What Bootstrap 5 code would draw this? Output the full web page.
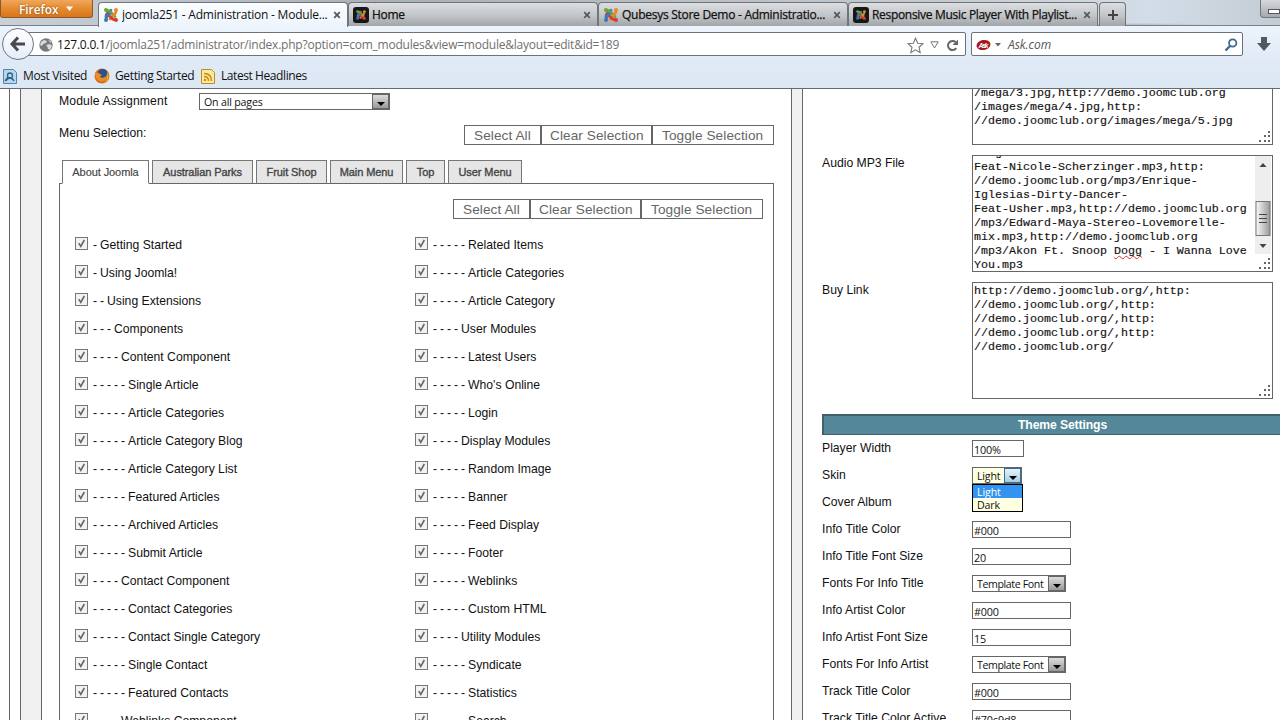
<!DOCTYPE html>
<html lang="en">
<head>
<meta charset="utf-8">
<title>joomla251 - Administration - Module Manager</title>
<link rel="stylesheet" href="https://cdn.jsdelivr.net/npm/bootstrap@5.3.0/dist/css/bootstrap.min.css">
<style>
body{width:1280px;height:720px;overflow:hidden;font:12.2px/16px "Liberation Sans",Arial,sans-serif;color:#111;background:#fff}
svg{display:block;flex:none}
.chrome{height:89px;font-family:"Open Sans","Noto Sans",sans-serif;font-size:12px;background:linear-gradient(#edf4fc 25px,#e0eaf6 60px,#dde8f5);border-bottom:1px solid #666b72;color:#111}
.strip{height:26px;background:radial-gradient(ellipse at 88% 100%,#aeb6be 0,#c3ccd500 6%),linear-gradient(90deg,#c9d0d8,#a9b0b6 30%,#c4cbd2 75%,#d3dde7 90%,#c3ccd5);border-bottom:1px solid #7a8087}
.ffx{width:93px;height:18px;background:linear-gradient(#f0a85b,#e58a31 50%,#d9751b);border:1px solid #8a5a2a;border-top:0;border-radius:0 0 3px 3px;color:#fff;font-weight:600;font-size:11.8px;line-height:18px;padding-left:18px;text-shadow:0 0 2px #7a4310}
.btab{width:250px;height:24px;margin-top:2px;border:1px solid #6f757b;border-bottom:0;border-radius:4px 4px 0 0;background:linear-gradient(#dcdee0,#c2c5c8 55%,#a2a5a8);padding:0 6px 0 4px;line-height:24px;white-space:nowrap}
.btab.on{height:25px;background:linear-gradient(#fbfdff,#edf4fc);position:relative;z-index:1}
.btab.plus{width:27px;padding:0;margin-left:1px}
.cap{flex:1;overflow:hidden;margin-left:3px}
.c1{letter-spacing:-.22px}.c2{letter-spacing:-.3px;-webkit-text-stroke:.25px}
.c3{letter-spacing:-.27px;-webkit-text-stroke:.25px}.c4{letter-spacing:-.31px;-webkit-text-stroke:.25px}
.minb{width:20px;height:18px;border:1px solid #70777e;border-top:0;border-right:0;border-radius:0 0 0 4px;background:linear-gradient(#d5d9dd,#a5aab0)}
.minb i{display:block;width:12px;height:5px;margin:9px 0 0 7px;background:#fff;border:1px solid #555}
.tools{height:37px;padding:6px 8px 0 2px}
.back{width:32px;height:32px;border:1px solid #6d7580;border-radius:50%;background:linear-gradient(#fff,#e4edf8);margin-top:-4px;z-index:2}
.url{width:942px;height:24px;margin-left:-10px;border:1px solid #6c727a;background:#fff;padding:2px 6px 0 10px;color:#6c6c6c;border-radius:0 2px 2px 0}
.url span{letter-spacing:-.225px;margin-left:4px;color:#707070;white-space:nowrap}
.url b{font-weight:400;color:#111}
.find{width:272px;height:24px;margin-left:5px;border:1px solid #6c727a;border-radius:2px;background:#fff;padding:1px 4px 0}
.marks{height:26px;padding-left:3px;letter-spacing:-.37px}
.page-area{height:631px;overflow:hidden}
.g{background:#f0f0f0;border:solid #666;border-width:0 1px}
.mainc{width:749px;padding:0 17px}
.sel{border:1px solid #666;background:#fff;height:17px;font:10.6px/17px "Open Sans","Noto Sans",sans-serif;padding-left:4px;letter-spacing:-.17px;white-space:nowrap;color:#111}
.sel.tf{letter-spacing:-.38px}
.sel i{width:17px;height:15px;border:1px solid #666;background:linear-gradient(#ddd,#999);display:flex;align-items:center;justify-content:center;margin-left:auto}
.sel i:after{content:"";border:4px solid transparent;border-top-color:#000;border-bottom:0;margin-top:4px}
.bset{height:20px}
.bset span{border:1px solid #666;margin-left:-1px;height:20px;font-size:13.6px;line-height:19px;color:#666;padding-left:9px;white-space:nowrap;letter-spacing:.09px}
.bset span + span{border-left-width:2px;padding-left:8px}
.bset span:last-child{padding-left:9px}
.tabset{height:24px;padding-left:3px;gap:3px;margin-bottom:-1px;position:relative}
.tabset span{border:1px solid #777;border-bottom-color:#666;background:#e6e6e6;color:#444;-webkit-text-stroke:.35px;font-size:11px;letter-spacing:-.08px;line-height:23px;text-align:center;height:24px;white-space:nowrap}
.tabset .on{background:#fff;border-bottom-color:#fff;-webkit-text-stroke:.15px}
.pane{width:715px;height:560px;border:1px solid #666;padding:15px 10px 0 15px}
.it{height:28px;white-space:nowrap;line-height:31px}
.it svg{margin:7px 5px 0 0}
.it em{font-style:normal;letter-spacing:-.18px;word-spacing:-.08px;white-space:pre}
.side{flex:1;padding-left:19px;overflow:hidden}
.side .lb{width:150px;flex:none;white-space:nowrap}
.ta{width:301px;border:1px solid #666;font:11.67px/14px "Liberation Mono","Courier New",monospace;white-space:pre;padding-left:1px;overflow:hidden;position:relative;color:#111;-webkit-text-stroke:.15px}
.grip{position:absolute;right:1px;bottom:1px}
.sb{position:absolute;right:1px;top:0;width:16px;height:98px;background:#eee}
.th{height:21px;background:#54879a;border:1px solid #41606c;border-top-width:2px;border-left-width:2px;border-right:0;color:#fff;font-weight:700;line-height:18px;padding-left:194px;letter-spacing:-.12px}
.fr{height:27px}
.inp{border:1px solid #666;height:17px;width:99px;font:10.8px/17px "Open Sans","Noto Sans",sans-serif;padding-left:1px;letter-spacing:-.15px}
.drop{position:absolute;left:0;top:17px;width:51px;height:28px;border:1px solid #000;background:#ffffe1;font:10.6px/14px "Open Sans","Noto Sans",sans-serif;z-index:3;letter-spacing:-.1px}
.drop div{padding-left:4px;height:13px}
.drop .hi{background:#3393f3;color:#fff}
.sg{text-decoration:underline wavy #d33 1px;text-underline-offset:1px;text-decoration-skip-ink:none}
</style>
</head>
<body>
<svg width="0" height="0" class="position-absolute">
<defs>
<g id="joom" fill="none" stroke-width="2.7" stroke-linecap="round">
<path stroke="#3d78b8" d="M3 10.5V9c0-1 .4-1.600 1-2.200l4-3.600"/><path stroke="#69a437" d="M3.500 3.500c1.500-.5 2.500 0 3.500 1l5 5"/><path stroke="#e8892b" d="M12.700 3.500c.5 1.500 0 2.500-1 3.500L7 12"/><path stroke="#db3c32" d="M12.500 12.500c-1.500.5-2.500 0-3.500-1L4 6.500"/>
<path stroke="#3d78b8" d="M3.500 12.500c-.5-1.500 0-2.500 1-3.500l2-2"/>
</g>
<symbol id="fav" viewBox="0 0 16 16"><use href="#joom"/><circle cx="3" cy="3" r="2" fill="#69a437"/><circle cx="13" cy="3" r="2" fill="#e8892b"/><circle cx="3" cy="13" r="2" fill="#3d78b8"/><circle cx="13" cy="13" r="2" fill="#db3c32"/></symbol>
<symbol id="favd" viewBox="0 0 16 16"><rect width="16" height="16" rx="3" fill="#15181a"/><use href="#fav" x="2.500" y="2.500" width="11" height="11"/></symbol>
<symbol id="cls" viewBox="0 0 8 8"><path d="M1.200 1.200l5.600 5.600M6.800 1.200L1.200 6.800" stroke="#54585c" stroke-width="1.700"/></symbol>
<symbol id="chk" viewBox="0 0 13 13"><rect x=".5" y=".5" width="12" height="12" fill="#f2f2f2" stroke="#777"/><path d="M3.800 6.200l2 3.300L9.300 3" fill="none" stroke="#666" stroke-width="1.600"/></symbol>
<symbol id="grp" viewBox="0 0 12 12"><path fill="#666" d="M9 0h2v2H9zM5 4h2v2H5zM9 4h2v2H9zM0 9h2v2H0zM5 9h2v2H5zM9 9h2v2H9z"/></symbol>
</defs></svg>

<header class="chrome">
  <div class="strip d-flex">
    <div class="ffx d-flex">Firefox<svg class="ms-2" style="margin-top:5px" width="8" height="8"><path d="M0 1.500h7L3.500 6z" fill="#fff"/></svg></div>
    <div class="btab on d-flex align-items-center" style="margin-left:5px"><svg width="16" height="16"><use href="#fav"/></svg><span class="cap c1">joomla251 - Administration - Module...</span><svg width="8" height="8"><use href="#cls"/></svg></div>
    <div class="btab d-flex align-items-center"><svg width="16" height="16"><use href="#favd"/></svg><span class="cap c2">Home</span><svg width="8" height="8"><use href="#cls"/></svg></div>
    <div class="btab d-flex align-items-center"><svg width="16" height="16"><use href="#fav"/></svg><span class="cap c3">Qubesys Store Demo - Administratio...</span><svg width="8" height="8"><use href="#cls"/></svg></div>
    <div class="btab d-flex align-items-center"><svg width="16" height="16"><use href="#favd"/></svg><span class="cap c4">Responsive Music Player With Playlist...</span><svg width="8" height="8"><use href="#cls"/></svg></div>
    <div class="btab plus d-flex align-items-center justify-content-center"><svg width="10" height="10"><path d="M5 0v10M0 5h10" stroke="#444" stroke-width="2"/></svg></div>
    <div class="minb ms-auto"><i></i></div>
  </div>
  <div class="tools d-flex">
    <div class="back d-flex align-items-center justify-content-center position-relative"><svg width="16" height="16"><path d="M8 1.500L2 8l6 6.500M2.500 8H15" fill="none" stroke="#47494d" stroke-width="3"/></svg></div>
    <div class="url d-flex align-items-center">
      <svg class="ms-1" width="14" height="14"><circle cx="7" cy="7" r="6.700" fill="#77797c"/><path d="M2 4l3-2 3 1-1 2-3 1-1 2-2-1zM7 7l4-1 2 2-2 4-2-1-1-3zM9 2l3 1v2z" fill="#d8dadc"/></svg>
      <span><b>127.0.0.1</b>/joomla251/administrator/index.php?option=com_modules&amp;view=module&amp;layout=edit&amp;id=189</span>
      <svg class="ms-auto" width="17" height="17"><path d="M8.500 1.200l2.200 5 5.300.500-4 3.600 1.200 5.300-4.700-2.800-4.700 2.800L5 10.300 1 6.700l5.300-.5z" fill="#fff" stroke="#777" stroke-width="1.100"/></svg>
      <svg style="margin-left:6px" width="9" height="8"><path d="M.8.800h7.400L4.500 7z" fill="#fff" stroke="#777"/></svg>
      <svg style="margin-left:7px" width="13" height="13"><path d="M10.300 9.200A4.600 4.600 0 1 1 9.600 3" fill="none" stroke="#666" stroke-width="2"/><path d="M12 .5V6H6.500z" fill="#666"/></svg>
    </div>
    <div class="find d-flex align-items-center">
      <svg width="15" height="12"><ellipse cx="7.500" cy="6" rx="7" ry="5" fill="#a8161b" transform="rotate(-12 7.500 6)"/><text x="2.500" y="8.500" font-size="7" font-weight="700" font-style="italic" fill="#fff" font-family="Liberation Sans" textLength="10">Ask</text></svg>
      <svg style="margin-left:4px" width="6" height="4"><path d="M0 0h6L3 3.500z" fill="#666"/></svg>
      <i style="margin-left:7px;color:#555;letter-spacing:-.05px">Ask.com</i>
      <svg class="ms-auto" width="14" height="14"><circle cx="8.700" cy="5" r="3.700" fill="none" stroke="#3c6a92" stroke-width="1.800"/><path d="M6 8L1.500 12.500" stroke="#3c6a92" stroke-width="2.400"/></svg>
    </div>
    <svg style="margin:5px 0 0 14px" width="14" height="14"><path d="M4 0h6v6h4l-7 8-7-8h4z" fill="#54595f"/></svg>
  </div>
  <div class="marks d-flex align-items-center">
    <svg width="14" height="15"><path d="M.5.500h10l3 3v11H.5z" fill="#b8d7ee" stroke="#5386ad"/><circle cx="7" cy="6.500" r="2.500" fill="none" stroke="#2f618a" stroke-width="1.300"/><path d="M3 12c1-3 3-3 4-3s3 1 4 3M5 8l-3 4" fill="none" stroke="#2f618a" stroke-width="1.300"/></svg>
    <span style="margin-left:6px;width:71px">Most Visited</span>
    <svg width="16" height="16"><circle cx="8" cy="8" r="7.500" fill="#d96a14"/><circle cx="8.500" cy="6" r="5" fill="#28528f"/><path d="M1 4c2 1 3 0 5 2l2 1-2 1.500c1 2 5 2 7-2 0 6-3 7-6 7S1 10 1 4z" fill="#ef8c1e"/><path d="M13 4c3 4 1 9-3 11 3-3 4-6 3-11z" fill="#f6c33b"/></svg>
    <span style="margin-left:5px;width:86px">Getting Started</span>
    <svg width="14" height="15"><path d="M.5.500h10l3 3v11H.5z" fill="#fbe9a0" stroke="#b98f22"/><circle cx="4" cy="11" r="1.200" fill="#c98a11"/><path d="M3 7.500c3 0 4.500 1.500 4.500 4.500M3 4.500c5 0 7.500 3 7.500 7.500" fill="none" stroke="#c98a11" stroke-width="1.500"/></svg>
    <span style="margin-left:6px;letter-spacing:-.42px">Latest Headlines</span>
  </div>
</header>

<main class="page-area d-flex">
  <div style="width:9px"></div>
  <div style="width:12px;border-left:1px solid #666"></div>
  <div class="g" style="width:22px;margin-left:-1px"></div>
  <section class="mainc">
    <div class="d-flex" style="padding-top:4px;height:36px"><span style="width:140px;letter-spacing:.12px">Module Assignment</span><div class="sel d-flex" style="width:191px">On all pages<i></i></div></div>
    <div class="d-flex justify-content-between" style="height:35px"><span>Menu Selection:</span>
      <div class="bset d-flex" style="width:310px"><span style="width:77px;margin-left:0">Select All</span><span style="width:112px">Clear Selection</span><span style="width:123px">Toggle Selection</span></div></div>
    <div class="tabset d-flex"><span class="on" style="width:87px">About Joomla</span><span style="width:101px">Australian Parks</span><span style="width:71px">Fruit Shop</span><span style="width:73px">Main Menu</span><span style="width:39px">Top</span><span style="width:74px">User Menu</span></div>
    <div class="pane">
      <div class="bset d-flex ms-auto" style="width:310px"><span style="width:77px;margin-left:0">Select All</span><span style="width:112px">Clear Selection</span><span style="width:123px">Toggle Selection</span></div>
      <div class="d-flex" style="padding-top:11px"><div id="menuA" style="width:340px"></div><div id="menuB"></div></div>
    </div>
  </section>
  <div class="g" style="width:12px"></div>
  <aside class="side">
    <div class="d-flex" style="height:66px"><div class="lb"></div><div class="ta" style="height:57px;border-top:0;margin-top:-1px"><div style="margin-top:-2px">/mega/3.jpg,http://demo.joomclub.org
/images/mega/4.jpg,http:
//demo.joomclub.org/images/mega/5.jpg</div><svg class="grip" width="12" height="12"><use href="#grp"/></svg></div></div>
    <div class="d-flex" style="height:127px"><div class="lb">Audio MP3 File</div><div class="ta" style="height:117px"><div style="margin-top:-10px">-Right-Now-
Feat-Nicole-Scherzinger.mp3,http:
//demo.joomclub.org/mp3/Enrique-
Iglesias-Dirty-Dancer-
Feat-Usher.mp3,http://demo.joomclub.org
/mp3/Edward-Maya-Stereo-Lovemorelle-
mix.mp3,http://demo.joomclub.org
/mp3/Akon Ft. Snoop <span class="sg">Dogg</span> - I Wanna Love
You.mp3</div>
      <svg class="sb" viewBox="0 0 16 98"><path d="M4.500 11L8 7l3.500 4zM4.500 88h7L8 92z" fill="#444"/><defs><linearGradient id="sg"><stop stop-color="#fafafa"/><stop offset="1" stop-color="#999"/></linearGradient></defs><rect x="1" y="45.500" width="14" height="34" fill="url(#sg)" stroke="#777"/><path d="M4 58.500h8M4 62.500h8M4 66.500h8" stroke="#444"/></svg>
      <svg class="grip" width="12" height="12"><use href="#grp"/></svg></div></div>
    <div class="d-flex" style="height:132px"><div class="lb">Buy Link</div><div class="ta" style="height:117px"><div style="padding-top:1px">http://demo.joomclub.org/,http:
//demo.joomclub.org/,http:
//demo.joomclub.org/,http:
//demo.joomclub.org/,http:
//demo.joomclub.org/</div><svg class="grip" width="12" height="12"><use href="#grp"/></svg></div></div>
    <div class="th">Theme Settings</div>
    <div style="padding-top:5px">
      <div class="fr d-flex"><div class="lb">Player Width</div><div class="inp" style="width:52px">100%</div></div>
      <div class="fr d-flex"><div class="lb">Skin</div><div class="position-relative"><div class="sel d-flex" style="width:50px;background:#ffffe1">Light<i style="background:linear-gradient(#e4f3fc,#a3cfe8);border-color:#3c6c8a"></i></div><div class="drop"><div class="hi">Light</div><div>Dark</div></div></div></div>
      <div class="fr d-flex"><div class="lb">Cover Album</div></div>
      <div class="fr d-flex"><div class="lb">Info Title Color</div><div class="inp">#000</div></div>
      <div class="fr d-flex"><div class="lb">Info Title Font Size</div><div class="inp">20</div></div>
      <div class="fr d-flex"><div class="lb">Fonts For Info Title</div><div class="sel tf d-flex" style="width:94px">Template Font<i></i></div></div>
      <div class="fr d-flex"><div class="lb">Info Artist Color</div><div class="inp">#000</div></div>
      <div class="fr d-flex"><div class="lb">Info Artist Font Size</div><div class="inp">15</div></div>
      <div class="fr d-flex"><div class="lb">Fonts For Info Artist</div><div class="sel tf d-flex" style="width:94px">Template Font<i></i></div></div>
      <div class="fr d-flex"><div class="lb">Track Title Color</div><div class="inp">#000</div></div>
      <div class="fr d-flex"><div class="lb">Track Title Color Active</div><div class="inp">#70c9d8</div></div>
    </div>
  </aside>
</main>
<script src="https://cdn.jsdelivr.net/npm/bootstrap@5.3.0/dist/js/bootstrap.bundle.min.js"></script>
<script>
// Menu items as [nesting depth, title]
const left=[[1,'Getting Started'],[1,'Using Joomla!'],[2,'Using Extensions'],[3,'Components'],[4,'Content Component'],[5,'Single Article'],[5,'Article Categories'],[5,'Article Category Blog'],[5,'Article Category List'],[5,'Featured Articles'],[5,'Archived Articles'],[5,'Submit Article'],[4,'Contact Component'],[5,'Contact Categories'],[5,'Contact Single Category'],[5,'Single Contact'],[5,'Featured Contacts'],[4,'Weblinks Component']];
const right=[[5,'Related Items'],[5,'Article Categories'],[5,'Article Category'],[4,'User Modules'],[5,'Latest Users'],[5,"Who's Online"],[5,'Login'],[4,'Display Modules'],[5,'Random Image'],[5,'Banner'],[5,'Feed Display'],[5,'Footer'],[5,'Weblinks'],[5,'Custom HTML'],[4,'Utility Modules'],[5,'Syndicate'],[5,'Statistics'],[5,'Search']];
const draw=(id,list)=>{document.getElementById(id).innerHTML=list.map(([n,t])=>`<div class="it d-flex"><svg width="13" height="13"><use href="#chk"/></svg><em>${'- '.repeat(n)}</em><span>${t}</span></div>`).join('')};
draw('menuA',left);draw('menuB',right);
</script>
</body>
</html>
